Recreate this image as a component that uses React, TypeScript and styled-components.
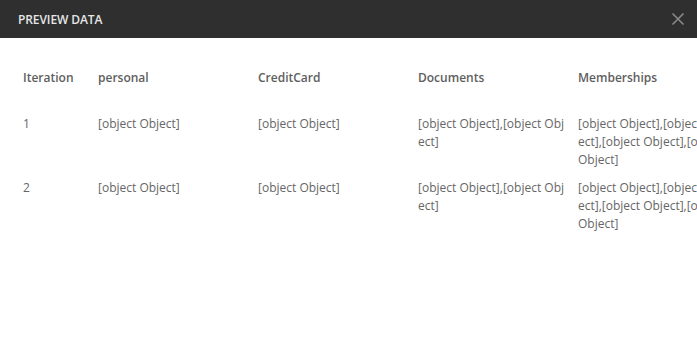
import React from "react";
import styled, { createGlobalStyle } from "styled-components";

const GlobalStyle = createGlobalStyle`
	html, body {
		margin: 0;
		padding: 0;
		background: #fff;
		overflow: hidden;
	}
	body {
		font-family: "Open Sans", "Liberation Sans", sans-serif;
	}
`;

const Dialog = styled.div`
	width: 697px;
	height: 352px;
	display: flex;
	flex-direction: column;
	background: #fff;
	overflow: hidden;
`;

const TitleBar = styled.div`
	display: flex;
	align-items: center;
	justify-content: space-between;
	height: 38px;
	padding: 0 11px 0 18px;
	background-color: #2f2f2f;
	flex-shrink: 0;
`;

const Title = styled.div`
	font-size: 12px;
	font-weight: 600;
	color: #e6e6e6;
	text-transform: uppercase;
	letter-spacing: -0.1px;
`;

const CloseButton = styled.button`
	display: flex;
	align-items: center;
	justify-content: center;
	width: 16px;
	height: 16px;
	padding: 0;
	border: none;
	background: transparent;
	cursor: pointer;
`;

const Body = styled.div`
	padding: 31px 0 0 23px;
	flex: 1;
`;

const Table = styled.div`
	display: grid;
	grid-template-columns: 75px repeat(4, 160px);
	width: max-content;
`;

const Cell = styled.div<{ $head?: boolean }>`
	font-size: 12px;
	line-height: 18px;
	color: ${(p) => (p.$head ? "#5e5e5e" : "#666")};
	font-weight: ${(p) => (p.$head ? 600 : 400)};
	padding: 0 10px ${(p) => (p.$head ? "28px" : "10px")} 0;
	word-break: break-all;
`;

const columns = ["Iteration", "personal", "CreditCard", "Documents", "Memberships"];

const obj = "[object Object]";
const rows = [1, 2].map((i) => [
	String(i),
	obj,
	obj,
	[obj, obj].join(","),
	[obj, obj, obj, obj].join(","),
]);

const CloseIcon = () => (
	<svg width="14" height="14" viewBox="0 0 14 14">
		<path d="M1.5 1.5 L12.5 12.5 M12.5 1.5 L1.5 12.5" stroke="#8a8a8a" strokeWidth="1.6" />
	</svg>
);

export default function App() {
	return (
		<>
			<GlobalStyle />
			<Dialog>
				<TitleBar>
					<Title>Preview Data</Title>
					<CloseButton aria-label="Close">
						<CloseIcon />
					</CloseButton>
				</TitleBar>
				<Body>
					<Table>
						{columns.map((c) => (
							<Cell key={c} $head>
								{c}
							</Cell>
						))}
						{rows.map((row, ri) =>
							row.map((val, ci) => <Cell key={ri + "-" + ci}>{val}</Cell>)
						)}
					</Table>
				</Body>
			</Dialog>
		</>
	);
}
